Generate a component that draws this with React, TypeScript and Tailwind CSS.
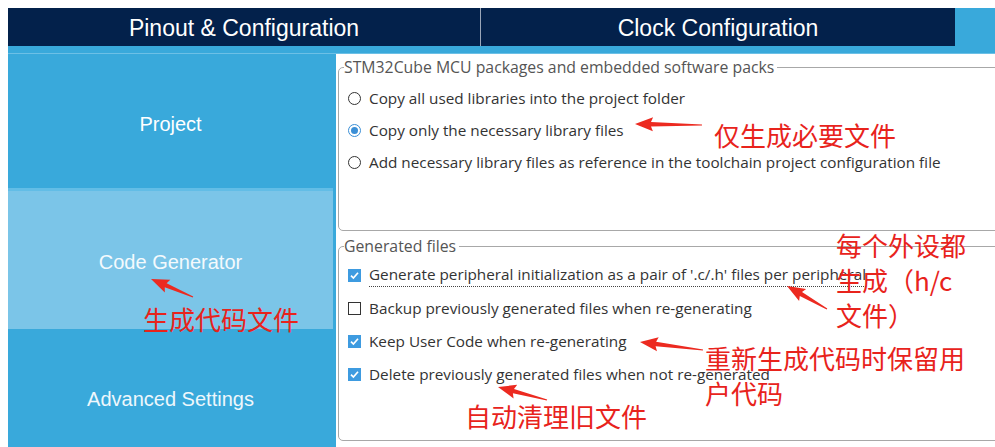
import React from 'react'

type Pt = [number, number]

// tapered annotation arrow, tail -> tip
const arrowPoints = (tail: Pt, tip: Pt, head = 16, hw = 7, sw = 2.2) => {
  const dx = tip[0] - tail[0]
  const dy = tip[1] - tail[1]
  const len = Math.hypot(dx, dy)
  const ux = dx / len
  const uy = dy / len
  const nx = -uy
  const ny = ux
  const bx = tip[0] - ux * head
  const by = tip[1] - uy * head
  const pts: Pt[] = [
    [tail[0] + nx * 0.6, tail[1] + ny * 0.6],
    [bx + nx * sw, by + ny * sw],
    [bx + nx * hw - ux * 2, by + ny * hw - uy * 2],
    tip,
    [bx - nx * hw - ux * 2, by - ny * hw - uy * 2],
    [bx - nx * sw, by - ny * sw],
    [tail[0] - nx * 0.6, tail[1] - ny * 0.6]
  ]
  return pts.map(p => `${p[0].toFixed(1)},${p[1].toFixed(1)}`).join(' ')
}

const arrows: { tail: Pt; tip: Pt }[] = [
  { tail: [702, 125], tip: [635, 124] },
  { tail: [827, 309], tip: [787, 286] },
  { tail: [703, 350], tip: [640, 342] },
  { tail: [547, 400], tip: [498, 387] },
  { tail: [193, 297], tip: [151, 279] }
]

const Radio = ({ checked }: { checked?: boolean }) => (
  <span
    className={`flex h-[13px] w-[13px] shrink-0 items-center justify-center rounded-full border bg-white ${
      checked ? 'border-[#3b8fd6]' : 'border-[#333333]'
    }`}
  >
    {checked && <span className="h-[7px] w-[7px] rounded-full bg-[#3b8fd6]" />}
  </span>
)

const Check = ({ checked }: { checked?: boolean }) =>
  checked ? (
    <span className="flex h-[13px] w-[13px] shrink-0 items-center justify-center bg-[#3e9be0]">
      <svg width="11" height="11" viewBox="0 0 11 11">
        <path d="M2 5.6 L4.4 8 L9 2.8" fill="none" stroke="white" strokeWidth="1.7" />
      </svg>
    </span>
  ) : (
    <span className="h-[13px] w-[13px] shrink-0 border border-[#333333] bg-white" />
  )

const Option = ({
  children,
  control,
  dotted,
  tall
}: {
  children: React.ReactNode
  control: React.ReactNode
  dotted?: boolean
  tall?: boolean
}) => (
  <div className={`flex items-center gap-[8px] pl-[9px] ${tall ? 'h-[33px]' : 'h-[32px]'}`}>
    {control}
    <span
      className={`whitespace-nowrap text-[15.3px] text-[#333333] ${
        dotted ? 'border-b border-dotted border-[#444]' : ''
      }`}
    >
      {children}
    </span>
  </div>
)

const Note = ({ className, children }: { className: string; children: React.ReactNode }) => (
  <div
    className={`absolute whitespace-pre text-[26px] leading-[35px] text-[#e8231c] ${className}`}
    style={{ fontFamily: '"Noto Sans CJK SC", sans-serif' }}
  >
    {children}
  </div>
)

export default function App() {
  return (
    <div
      className="relative h-[447px] w-[995px] overflow-hidden bg-white pl-2 pt-2"
      style={{ fontFamily: '"Liberation Sans", Arial, sans-serif' }}
    >
      {/* Top tabs */}
      <div className="flex h-[38px]">
        <div className="flex w-[473px] items-center justify-center border-r border-[#9aa6b8] bg-[#03214b] pt-[2px] text-[23px] text-white">
          Pinout &amp; Configuration
        </div>
        <div className="flex w-[474px] items-center justify-center bg-[#03214b] pt-[2px] text-[23px] text-white">
          Clock Configuration
        </div>
        <div className="flex-1 bg-[#39a9db]" />
      </div>
      <div className="h-[8px] border-b border-[#6cc0e6] bg-[#39a9db]" />

      <div className="flex h-[420px]">
        {/* Sidebar */}
        <div className="flex w-[325px] flex-col text-[20px] text-white">
          <div className="flex h-[137px] items-center justify-center border-b-[3px] border-[#62bde6] bg-[#39a9db] pt-[6px]">
            Project
          </div>
          <div className="flex h-[138px] items-start justify-center bg-[#7bc5e8] pt-[56px] text-[#f4fafd]">
            Code Generator
          </div>
          <div className="flex h-[140px] items-center justify-center bg-[#39a9db] text-[#eef7fc]">
            Advanced Settings
          </div>
        </div>

        {/* Panel */}
        <div
          className="flex-1 overflow-hidden border-l-[3px] border-[#39a9db] pl-[2px] pt-[2px]"
          style={{ fontFamily: '"Open Sans", "Noto Sans", sans-serif' }}
        >
          <fieldset className="h-[175px] w-[700px] rounded-[5px] border border-[#a8a8a8] pl-0">
            <legend className="ml-[5px] pr-[3px] text-[15.8px] text-[#555555]">
              STM32Cube MCU packages and embedded software packs
            </legend>
            <div className="pt-[3px]">
              <Option control={<Radio />}>Copy all used libraries into the project folder</Option>
              <Option control={<Radio checked />}>Copy only the necessary library files</Option>
              <Option control={<Radio />}>
                Add necessary library files as reference in the toolchain project configuration file
              </Option>
            </div>
          </fieldset>

          <fieldset className="mt-[4px] h-[206px] w-[700px] rounded-[5px] border border-[#a8a8a8]">
            <legend className="ml-[5px] pr-[3px] text-[15.8px] text-[#555555]">Generated files</legend>
            <div>
              <Option tall control={<Check checked />} dotted>
                Generate peripheral initialization as a pair of '.c/.h' files per peripheral
              </Option>
              <Option tall control={<Check />}>Backup previously generated files when re-generating</Option>
              <Option tall control={<Check checked />}>Keep User Code when re-generating</Option>
              <Option tall control={<Check checked />}>Delete previously generated files when not re-generated</Option>
            </div>
          </fieldset>
        </div>
      </div>

      {/* Annotations */}
      <Note className="left-[714px] top-[117px]">仅生成必要文件</Note>
      <Note className="left-[836px] top-[227px]">{'每个外设都\n生成（h/c\n文件）'}</Note>
      <Note className="left-[705px] top-[340px]">{'重新生成代码时保留用\n户代码'}</Note>
      <Note className="left-[465px] top-[398px]">自动清理旧文件</Note>
      <Note className="left-[143px] top-[301px]">生成代码文件</Note>

      <svg className="pointer-events-none absolute left-0 top-0" width="995" height="447">
        {arrows.map((a, i) => (
          <polygon key={i} points={arrowPoints(a.tail, a.tip)} fill="#ec2a20" />
        ))}
      </svg>
    </div>
  )
}
